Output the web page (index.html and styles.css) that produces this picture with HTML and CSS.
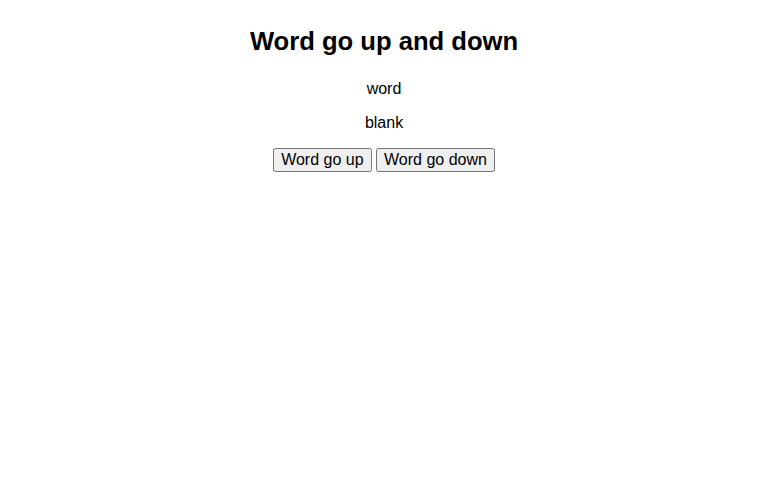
FILE: index.html
```html
<!DOCTYPE html>
<html lang="en">
<head>
<meta charset="utf-8">
<title>Word go up and down</title>
<link rel="stylesheet" href="styles.css">
</head>
<body>
<main class="page">
  <h1 class="title">Word go up and down</h1>
  <p class="slot" id="top">word</p>
  <p class="slot" id="bottom">blank</p>
  <div class="controls">
    <button class="btn" type="button">Word go up</button>
    <button class="btn" type="button">Word go down</button>
  </div>
</main>
</body>
</html>
```
FILE: styles.css
```css
body {
  margin: 0;
  padding: 8px;
  font-family: "Liberation Sans", Arial, sans-serif;
  font-size: 16px;
  color: #000;
  background: #fff;
}

.page {
  text-align: center;
}

.title {
  font-size: 25.6px;
  font-weight: bold;
  margin: 19.4px 0 23.2px;
}

.slot {
  margin: 16px 0;
}

.controls {
  margin: 0;
}

.btn {
  font-family: "Liberation Sans", Arial, sans-serif;
  font-size: 16px;
}
```
